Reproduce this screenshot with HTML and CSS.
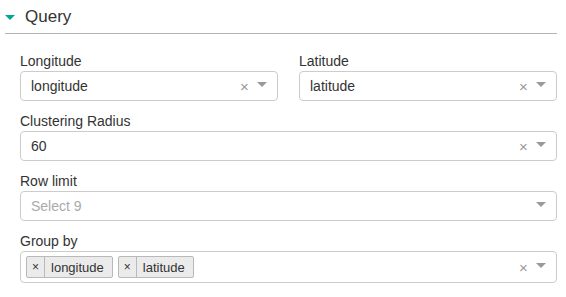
FILE: index.html
```html
<!DOCTYPE html>
<html lang="en">
<head>
    <meta charset="UTF-8">
    <title>Query</title>
    <link rel="stylesheet" href="styles.css">
</head>
<body>
    <div class="panel">
        <div class="panel-head">
            <span class="caret"></span>
            <span class="panel-title">Query</span>
        </div>
        <div class="panel-body">
            <div class="row">
                <div class="field">
                    <label>Longitude</label>
                    <div class="select">
                        <span class="value">longitude</span>
                        <span class="clear">&times;</span>
                        <span class="arrow"></span>
                    </div>
                </div>
                <div class="field">
                    <label>Latitude</label>
                    <div class="select">
                        <span class="value">latitude</span>
                        <span class="clear">&times;</span>
                        <span class="arrow"></span>
                    </div>
                </div>
            </div>
            <div class="field">
                <label>Clustering Radius</label>
                <div class="select">
                    <span class="value">60</span>
                    <span class="clear">&times;</span>
                    <span class="arrow"></span>
                </div>
            </div>
            <div class="field">
                <label>Row limit</label>
                <div class="select">
                    <span class="value placeholder">Select 9</span>
                    <span class="arrow"></span>
                </div>
            </div>
            <div class="field">
                <label>Group by</label>
                <div class="select multi">
                    <div class="tags">
                        <span class="tag"><span class="tag-x">&times;</span><span class="tag-label">longitude</span></span>
                        <span class="tag"><span class="tag-x">&times;</span><span class="tag-label">latitude</span></span>
                    </div>
                    <span class="clear">&times;</span>
                    <span class="arrow"></span>
                </div>
            </div>
        </div>
    </div>
</body>
</html>
```

FILE: styles.css
```css
body {
    font-family: 'Liberation Sans', Arial, sans-serif;
    margin: 0;
    padding: 0;
    background-color: #fff;
    color: #333;
}
.panel {
    padding: 0 9px 0 5px;
}
.panel-head {
    display: flex;
    align-items: center;
    height: 33px;
    border-bottom: 1px solid #b3b3b3;
}
.caret {
    width: 0;
    height: 0;
    border-left: 5px solid transparent;
    border-right: 5px solid transparent;
    border-top: 5px solid #00a699;
    margin: 1px 10px 0 0;
}
.panel-title {
    font-size: 17px;
    color: #333;
}
.panel-body {
    padding: 18px 0 0 15px;
}
.row {
    display: flex;
    gap: 21px;
}
.row .field {
    flex: 1;
}
.field {
    margin-bottom: 11px;
}
.field label {
    display: block;
    font-size: 14px;
    line-height: 18px;
    margin-bottom: 1px;
}
.select {
    display: flex;
    align-items: center;
    height: 30px;
    box-sizing: border-box;
    border: 1px solid #ccc;
    border-radius: 4px;
    padding: 0 10px;
    font-size: 14px;
}
.select .value {
    flex: 1;
}
.select .placeholder {
    color: #aaa;
}
.clear {
    color: #999;
    font-size: 15px;
    width: 17px;
    text-align: center;
    margin-right: 4px;
}
.arrow {
    width: 0;
    height: 0;
    border-left: 5px solid transparent;
    border-right: 5px solid transparent;
    border-top: 5px solid #999;
    margin-top: -3px;
}
.select.multi {
    height: 32px;
    padding-left: 5px;
}
.tags {
    flex: 1;
    display: flex;
    gap: 5px;
}
.tag {
    display: flex;
    align-items: center;
    height: 22px;
    box-sizing: border-box;
    background-color: #ebebeb;
    border: 1px solid #b9b9b9;
    border-radius: 2px;
    font-size: 13px;
}
.tag-x {
    padding: 0 5px;
    font-size: 12px;
    line-height: 20px;
    border-right: 1px solid #b9b9b9;
}
.tag-label {
    padding: 0 8px 0 6px;
}
```
